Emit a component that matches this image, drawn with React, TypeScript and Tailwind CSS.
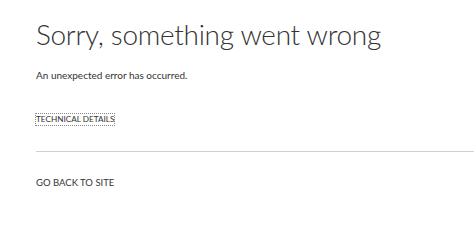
export default function App() {
  return (
    <div className="w-[474px] h-[251px] bg-white overflow-hidden pl-[36px] pt-[18px]" style={{ fontFamily: 'Lato, "Open Sans", sans-serif' }}>
      <h1 className="text-[28px] leading-[33px] font-light text-[#333] tracking-[-0.3px]">Sorry, something went wrong</h1>
      <p className="mt-[17px] text-[10px] leading-[14px] text-[#333]">An unexpected error has occurred.</p>
      <div className="mt-[32px] flex">
        <span className="text-[8.2px] leading-[11px] text-[#333] outline outline-1 outline-dotted outline-[#888]">TECHNICAL DETAILS</span>
      </div>
      <div className="mt-[26px] h-[1px] bg-[#d0d0d0]" />
      <p className="mt-[24px] text-[9.5px] leading-[14px] text-[#333]">GO BACK TO SITE</p>
    </div>
  );
}
